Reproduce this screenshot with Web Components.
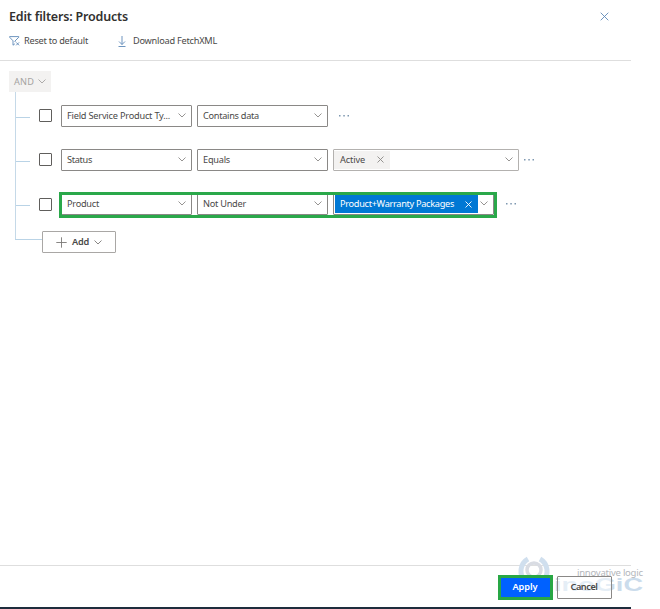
<!DOCTYPE html>
<html lang="en"><head><meta charset="utf-8"><title>Edit filters</title>
<style>html,body{margin:0;background:#fff}body{font:9.2px "Noto Sans","Open Sans",sans-serif;color:#4a4948}</style></head>
<body><filter-panel></filter-panel>
<script>
const define=(name,html,setup)=>customElements.define(name,class extends HTMLElement{
  connectedCallback(){
    if(this.shadowRoot)return;
    this.attachShadow({mode:'open'}).innerHTML=html;
    if(setup)setup(this,this.shadowRoot);
  }
});

// Text set to a given measure by adjusting its tracking.
define('fit-text','<style>:host{display:inline-block;white-space:nowrap;line-height:14px}span{display:inline-block}</style><span><slot></slot></span>',(el,root)=>{
  const s=root.querySelector('span'),w=+el.getAttribute('w');
  const n=s.getBoundingClientRect().width;
  s.style.letterSpacing=((w-n)/el.textContent.length)+'px';
  el.style.width=w+'px';
});

const icons={
  chevron:'<svg width="8" height="5" viewBox="0 0 8 5"><path d="M.5.5 4 4 7.5.5"/></svg>',
  close:'<svg width="7" height="7" viewBox="0 0 7 7"><path d="M.5.5l6 6M6.5.5l-6 6"/></svg>',
  bigclose:'<svg width="9" height="9" viewBox="0 0 9 9"><path d="M.7.7l7.6 7.6M8.3.7.7 8.3"/></svg>',
  plus:'<svg width="11" height="11" viewBox="0 0 11 11"><path d="M5.5.3v10.4M.3 5.5h10.4"/></svg>',
  filter:'<svg width="11" height="10" viewBox="0 0 11 10"><path d="M6 6V5L9.8 1.2V.6H.6v.6L4 4.8v4.4l1.9-1.4M7.2 6.4l2.9 2.9M10.1 6.4 7.2 9.3"/></svg>',
  download:'<svg width="8" height="11" viewBox="0 0 8 11"><path d="M4 0v8.5M1 5.5l3 3 3-3M.5 10.5h7"/></svg>'
};
define('ui-icon','<style>:host{display:inline-flex;flex:none}svg{fill:none;stroke:currentColor;stroke-width:.9;display:block}div{display:flex}</style><div></div>',(el,root)=>{
  root.querySelector('div').innerHTML=icons[el.getAttribute('name')];
});

define('drop-field',`<style>:host{display:flex;box-sizing:border-box;width:131px;height:22px;border:1px solid #8a8886;border-radius:1px;padding:0 5.500px 0 5px;align-items:center;justify-content:space-between;background:#fff}
ui-icon{color:#8a8886;margin-bottom:1px}</style><slot></slot><ui-icon name="chevron"></ui-icon>`);

define('value-tag',`<style>:host{display:flex;box-sizing:border-box;height:18px;padding:0 6px;align-items:center;justify-content:space-between;background:#f3f2f1;color:#4a4948}
ui-icon{color:#8a8886}:host([selected]) ui-icon{color:#fff}
:host([selected]){background:#0078d4;color:#fff}</style><slot></slot><ui-icon name="close"></ui-icon>`);

define('more-dots',`<style>:host{display:flex;width:10px;height:11px;align-items:center}svg{display:block}</style><svg width="10" height="2" viewBox="0 0 10 2" fill="#7d97b0"><path d="M0 0h1.500v1.500H0zM4.300 0h1.500v1.500H4.300zM8.500 0H10v1.500H8.500z"/></svg>`);

define('filter-row',`<style>:host{display:flex;height:21px;align-items:center;gap:5px}
.stub{width:14px;height:1px;background:#b9d3e6;margin:3px 4px 0 0}
.check{box-sizing:border-box;width:13px;height:13px;border:1px solid #605e5c;border-radius:1px;margin-right:4px}</style><span class="stub"></span><span class="check"></span><slot></slot>`);

define('action-button',`<style>:host{display:flex;box-sizing:border-box;height:23px;width:55px;border:1px solid #8a8886;border-radius:1px;align-items:center;justify-content:center;font-weight:600;background:rgba(255,255,255,.5)}
:host([primary]){height:25px;border:3.5px solid #28a745;background:#0061ff;color:#fff;border-radius:0}</style><slot></slot>`);

define('brand-mark',`<style>:host{display:block;width:128px;height:44px}svg{display:block}</style>
<svg width="128" height="44" viewBox="516 554 128 44"><g fill="none" stroke="#d0dfee">
<path stroke-width="5" d="M528 559a14 14 0 0 0-3 22M540 559a14 14 0 0 1 3 22"/><circle cx="534" cy="570" r="7" stroke="#d9dce3" stroke-width="3.500"/></g>
<text x="554" y="591" textLength="89" lengthAdjust="spacingAndGlyphs" font-family="Liberation Sans" font-weight="bold" font-size="19" fill="#cbdcec">inoGiC</text>
<text x="577" y="576" textLength="66" font-size="9.500" fill="#b3b6bb">innovative logic</text></svg>`);

define('filter-panel',`<style>
:host{display:flex;flex-direction:column;width:631px;height:609px;box-sizing:border-box;position:relative;border-bottom:2px solid #1e2d3d}
header{display:flex;flex-direction:column;height:61px;box-sizing:border-box;border-bottom:1px solid #dedede;padding:9px 22px 0 9px}
.title{display:flex;justify-content:space-between;align-items:center;height:15px;font-size:12.500px;font-weight:600;color:#323130}
.title ui-icon,.tools ui-icon{color:#5e89b8}
.tools{display:flex;align-items:center;height:16px;margin-top:9px}
main{flex:1;padding:10px 0 0 9px}
.and{display:flex;width:42px;height:21px;box-sizing:border-box;background:#f3f2f1;color:#a5a3a1;align-items:center;padding:0 5px;justify-content:space-between}
.tree{margin-left:6px;border-left:1px solid #c5d9e8;height:147px;display:flex;flex-direction:column;padding-top:13px;box-sizing:border-box;gap:23.300px;position:relative}
.r1 more-dots{margin-left:6px}
.r2 .val{width:186px;padding-left:0;border-color:#b3b1af}
.r3 .val{width:161px;padding-left:1px;padding-right:5px}
.outline{position:absolute;left:43px;top:100px;width:438px;height:26px;box-sizing:border-box;border:3.500px solid #2aa84a}
.addline{display:flex;margin-left:6px;height:14px;align-items:flex-start}
.addline i{width:27px;height:1px;background:#b9d3e6}
.add{display:flex;align-items:center;justify-content:space-between;box-sizing:border-box;width:74px;height:22px;margin-top:-8px;border:1px solid #a9a7a5;border-radius:1px;padding:0 13px;font-weight:600}
.add ui-icon{color:#7a7876}
footer{display:flex;border-top:1px solid #dedede;height:42px;box-sizing:border-box;justify-content:flex-end;align-items:flex-start;padding:9px 19px 0 0;gap:4px}
footer action-button:last-child{margin-top:1px}
footer fit-text{margin-top:-1px;margin-right:1px}
brand-mark{position:absolute;left:516px;top:554px}
footer action-button{position:relative}
</style>
<header><div class="title"><fit-text w="119">Edit filters: Products</fit-text><ui-icon name="bigclose"></ui-icon></div>
<div class="tools"><ui-icon name="filter"></ui-icon><fit-text w="64" style="margin:0 30px 0 4px">Reset to default</fit-text><ui-icon name="download"></ui-icon><fit-text w="84" style="margin-left:7px">Download FetchXML</fit-text></div></header>
<main><div class="and"><fit-text w="20">AND</fit-text><ui-icon name="chevron"></ui-icon></div>
<div class="tree">
<filter-row class="r1"><drop-field><fit-text w="103">Field Service Product Ty...</fit-text></drop-field><drop-field><fit-text w="56">Contains data</fit-text></drop-field><more-dots></more-dots></filter-row>
<filter-row class="r2"><drop-field><fit-text w="25">Status</fit-text></drop-field><drop-field><fit-text w="27">Equals</fit-text></drop-field><drop-field class="val"><value-tag style="width:56px"><fit-text w="25">Active</fit-text></value-tag></drop-field><more-dots></more-dots></filter-row>
<filter-row class="r3"><drop-field><fit-text w="32">Product</fit-text></drop-field><drop-field><fit-text w="43">Not Under</fit-text></drop-field><drop-field class="val"><value-tag selected style="width:143px;padding-left:5px"><fit-text w="114">Product+Warranty Packages</fit-text></value-tag></drop-field><more-dots style="margin-left:7px"></more-dots></filter-row>
<div class="outline"></div></div>
<div class="addline"><i></i><div class="add"><ui-icon name="plus"></ui-icon><fit-text w="17">Add</fit-text><ui-icon name="chevron"></ui-icon></div></div>
</main>
<brand-mark></brand-mark>
<footer><action-button primary><fit-text w="25">Apply</fit-text></action-button><action-button><fit-text w="27">Cancel</fit-text></action-button></footer>`);
</script></body></html>
